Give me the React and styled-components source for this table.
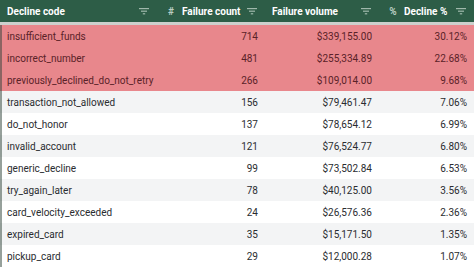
import styled, { createGlobalStyle } from "styled-components";

const rows = [
  { code: "insufficient_funds", count: 714, volume: "$339,155.00", pct: "30.12%", flagged: true },
  { code: "incorrect_number", count: 481, volume: "$255,334.89", pct: "22.68%", flagged: true },
  { code: "previously_declined_do_not_retry", count: 266, volume: "$109,014.00", pct: "9.68%", flagged: true },
  { code: "transaction_not_allowed", count: 156, volume: "$79,461.47", pct: "7.06%" },
  { code: "do_not_honor", count: 137, volume: "$78,654.12", pct: "6.99%" },
  { code: "invalid_account", count: 121, volume: "$76,524.77", pct: "6.80%" },
  { code: "generic_decline", count: 99, volume: "$73,502.84", pct: "6.53%" },
  { code: "try_again_later", count: 78, volume: "$40,125.00", pct: "3.56%" },
  { code: "card_velocity_exceeded", count: 24, volume: "$26,576.36", pct: "2.36%" },
  { code: "expired_card", count: 35, volume: "$15,171.50", pct: "1.35%" },
  { code: "pickup_card", count: 29, volume: "$12,000.28", pct: "1.07%" },
];

const FilterIcon = () => (
  <svg width="10" height="8" viewBox="0 0 10 8">
    <rect x="0" y="1" width="10" height="1.2" fill="#9fb8ab" />
    <rect x="2" y="3.6" width="6" height="1.2" fill="#9fb8ab" />
    <rect x="3.8" y="6.2" width="2.4" height="1.2" fill="#9fb8ab" />
  </svg>
);

const App = () => {
  return (
    <>
      <GlobalStyle />
      <Table>
        <HeaderRow>
          <HeadCell>
            <HeadLabel>Decline code</HeadLabel>
            <FilterIcon />
          </HeadCell>
          <HeadCell>
            <TypeMark>#</TypeMark>
            <HeadLabel>Failure count</HeadLabel>
            <FilterIcon />
          </HeadCell>
          <HeadCell>
            <HeadLabel>Failure volume</HeadLabel>
            <FilterIcon />
          </HeadCell>
          <HeadCell>
            <TypeMark>%</TypeMark>
            <HeadLabel>Decline %</HeadLabel>
            <FilterIcon />
          </HeadCell>
        </HeaderRow>
        {rows.map((r, i) => (
          <Row key={r.code} $flagged={r.flagged} $striped={i % 2 === 1}>
            <Cell>{r.code}</Cell>
            <Cell $num>{r.count}</Cell>
            <Cell $num>{r.volume}</Cell>
            <Cell $num>{r.pct}</Cell>
          </Row>
        ))}
      </Table>
    </>
  );
};

export default App;

const GlobalStyle = createGlobalStyle`
  html, body {
    margin: 0;
    padding: 0;
    background: #ffffff;
    overflow: hidden;
  }
  body {
    font-family: Roboto, "Liberation Sans", sans-serif;
  }
`;

const Table = styled.div`
  width: 474px;
  height: 268px;
  overflow: hidden;
`;

const columns = "157px 108px 114px 95px";

const HeaderRow = styled.div`
  display: grid;
  grid-template-columns: ${columns};
  height: 22px;
  background: #2d5d47;
  border-bottom: 3px solid #cdd0cd;
`;

const HeadCell = styled.div`
  display: flex;
  align-items: center;
  gap: 6px;
  padding: 0 8px 0 7px;
  color: #ffffff;
  font-size: 10px;
  font-weight: 700;
  > svg {
    margin-left: auto;
    flex-shrink: 0;
  }
`;

const HeadLabel = styled.span`
  white-space: nowrap;
`;

const TypeMark = styled.span`
  color: #b9cdc2;
  font-size: 10px;
  font-weight: 700;
  width: 10px;
  text-align: center;
  margin-left: 2px;
`;

const Row = styled.div`
  display: grid;
  grid-template-columns: ${columns};
  height: 22px;
  align-items: center;
  background: ${(p) => (p.$flagged ? "#e8878c" : p.$striped ? "#f3f4f5" : "#ffffff")};
  color: ${(p) => (p.$flagged ? "#5a2228" : "#2a2c30")};
  box-shadow: inset 2px 0 0 rgba(45, 65, 55, 0.5);
`;

const Cell = styled.div`
  padding: 0 7px;
  font-size: 10px;
  white-space: nowrap;
  text-align: ${(p) => (p.$num ? "right" : "left")};
`;
